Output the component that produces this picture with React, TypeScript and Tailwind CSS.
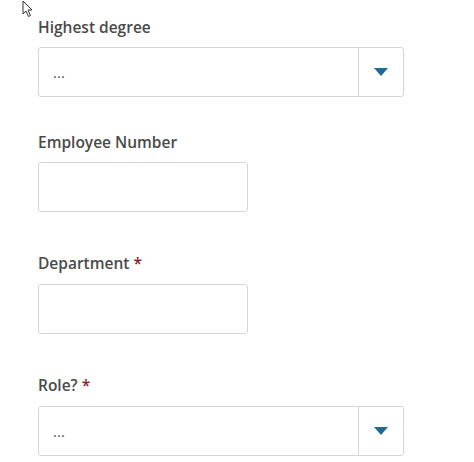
const labelCls = "block text-[15.5px] leading-5 font-semibold text-[#4a4a4a]"

const Asterisk = () => <span className="ml-1 text-[#8b1c2c]">*</span>

const Caret = () => (
    <svg width="14" height="8" viewBox="0 0 14 8" className="block">
        <path d="M0 0 H14 L7 8 Z" fill="#1f6a96" />
    </svg>
)

const SelectBox = () => (
    <div className="flex h-[50px] w-[366px] rounded-[3px] border border-[#d6d6d6] bg-white">
        <div className="flex flex-1 items-center pl-[14px] text-[15px] text-[#555555]">...</div>
        <div className="flex w-[45px] items-center justify-center border-l border-[#d6d6d6]">
            <Caret />
        </div>
    </div>
)

const TextBox = () => (
    <div className="h-[50px] w-[210px] rounded-[3px] border border-[#d6d6d6] bg-white" />
)

export default function App() {
    return (
        <div
            className="relative h-[462px] w-[474px] overflow-hidden bg-white pl-[38px] pt-[17px]"
            style={{ fontFamily: '"Open Sans", "Noto Sans", sans-serif' }}
        >
            {/* mouse cursor */}
            <svg width="12" height="18" viewBox="0 0 12 18" className="absolute left-[22px] top-0">
                <path d="M1 1 L1 14 L4 11 L6.5 16.5 L8.5 15.5 L6 10 L10 10 Z" fill="white" stroke="#333" strokeWidth="1" strokeLinejoin="round" />
            </svg>

            <label className={labelCls}>Highest degree</label>
            <div className="mt-[10px]">
                <SelectBox />
            </div>

            <label className={`${labelCls} mt-[35px]`}>Employee Number</label>
            <div className="mt-[10px]">
                <TextBox />
            </div>

            <label className={`${labelCls} mt-[41px]`}>
                Department<Asterisk />
            </label>
            <div className="mt-[11px]">
                <TextBox />
            </div>

            <label className={`${labelCls} mt-[41px]`}>
                Role?<Asterisk />
            </label>
            <div className="mt-[11px]">
                <SelectBox />
            </div>
        </div>
    )
}
